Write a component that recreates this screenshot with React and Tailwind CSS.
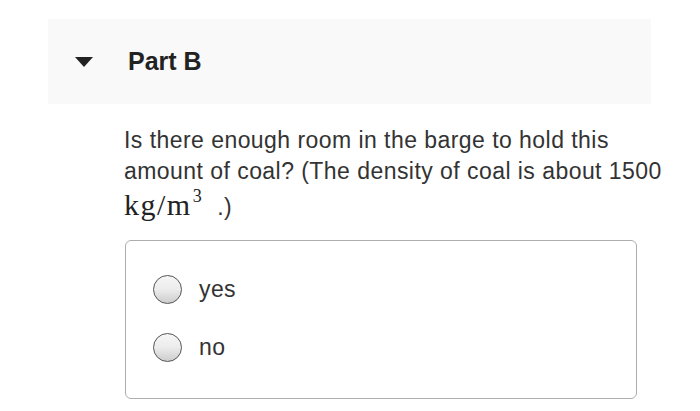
const sans = "font-['Liberation_Sans',Arial,sans-serif]";

function Radio({ label }) {
  return (
    <label className="flex h-[29px] items-center gap-[17px]">
      <span className="h-[29px] w-[29px] shrink-0 rounded-full border-[1.5px] border-[#555] bg-linear-to-b from-[#f6f6f6] via-[#ececec] to-[#cdcdcd]" />
      <span className="text-[23px] leading-none tracking-[0.4px] text-[#333]">{label}</span>
    </label>
  );
}

export default function App() {
  return (
    <div className={`${sans} h-[411px] w-[700px] overflow-hidden bg-white`}>
      <div className="ml-[48px] mt-[19px] flex h-[85px] w-[603px] items-center bg-[#f9f9f9] pl-[27px]">
        <span className="h-0 w-0 border-x-[9.5px] border-t-[10px] border-x-transparent border-t-[#222]" />
        <h2 className="ml-[35px] text-[25px] font-bold leading-none text-[#222]">Part B</h2>
      </div>

      <div className="pl-[124px]">
        <p className="mt-[21px] w-[552px] text-[23px] leading-[31px] tracking-[0.45px] text-[#333]">
          Is there enough room in the barge to hold this amount of coal? (The density of coal is about 1500{" "}
          <span className="font-['Liberation_Serif','Times_New_Roman',serif] text-[30px] leading-[36px] tracking-[1.5px] text-[#222]">
            kg/m<sup className="top-[-0.75em] ml-px text-[18px]">3</sup>
          </span>
          <span className="ml-[14px]">.)</span>
        </p>

        <div className="ml-px mt-[17px] flex h-[159px] w-[512px] flex-col gap-[29px] rounded-[6px] border-[1.5px] border-[#adadad] pl-[27px] pt-[34px]">
          <Radio label="yes" />
          <Radio label="no" />
        </div>
      </div>
    </div>
  );
}
